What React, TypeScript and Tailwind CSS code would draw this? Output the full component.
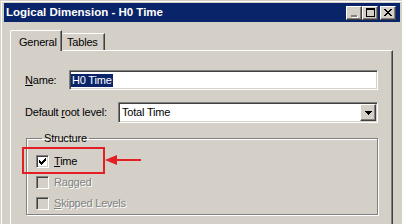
import React from 'react';

const raised =
  'bg-[#d4d0c8] border border-t-white border-l-white border-r-[#404040] border-b-[#404040] shadow-[inset_-1px_-1px_0_#808080]';
const sunken =
  'border border-t-[#808080] border-l-[#808080] border-r-white border-b-white shadow-[inset_1px_1px_0_#404040,inset_-1px_-1px_0_#d4d0c8]';

function TitleButton({ children, gap }: { children: React.ReactNode; gap?: boolean }) {
  return (
    <div className={`${raised} w-[16px] h-[14px] flex items-center justify-center ${gap ? 'ml-[2px]' : ''}`}>
      {children}
    </div>
  );
}

// classic 7x7 check mark, pixel by pixel
const checkPixels: [number, number, number][] = [
  [6, 0, 1], [5, 1, 2], [0, 2, 1], [4, 2, 3], [0, 3, 2], [3, 3, 3], [0, 4, 5], [1, 5, 3], [2, 6, 1],
];

function CheckBox({ checked, disabled }: { checked?: boolean; disabled?: boolean }) {
  return (
    <div className={`${sunken} w-[13px] h-[13px] flex items-center justify-center ${disabled ? 'bg-[#d4d0c8]' : 'bg-white'}`}>
      {checked && (
        <svg width="7" height="7" viewBox="0 0 7 7" shapeRendering="crispEdges">
          {checkPixels.map(([x, y, w]) => (
            <rect key={`${x}-${y}`} x={x} y={y} width={w} height={1} fill="#000" />
          ))}
        </svg>
      )}
    </div>
  );
}

function Row({ mnemonic, rest, checked, disabled, plain }: {
  mnemonic: string; rest: string; checked?: boolean; disabled?: boolean; plain?: boolean;
}) {
  return (
    <div className="h-[21px] flex items-center">
      <CheckBox checked={checked} disabled={disabled} />
      <span className={`ml-[5px] ${disabled ? 'text-[#808080] [text-shadow:1px_1px_0_#fff]' : 'text-black'}`}>
        {plain ? mnemonic : <u className="underline-offset-1">{mnemonic}</u>}
        {rest}
      </span>
    </div>
  );
}

export default function App() {
  return (
    <div className="relative w-[402px] h-[224px] overflow-hidden bg-[#d4d0c8] pt-[3px] pl-[4px] shadow-[inset_1px_1px_0_#d4d0c8,inset_2px_2px_0_#fff] font-['Liberation_Sans',Arial,sans-serif] text-[11px] leading-[13px] tracking-[-0.2px] text-black">
      {/* title bar */}
      <div className="mr-[2px] h-[19px] bg-[#0a246a] flex items-center justify-between pl-[2px] pr-[4px]">
        <span className="text-white font-bold text-[11.5px] tracking-[0px]">Logical Dimension - H0 Time</span>
        <div className="flex">
          <TitleButton>
            <div className="w-[6px] h-[2px] bg-[#808080] mt-[6px] shadow-[1px_1px_0_#fff]" />
          </TitleButton>
          <TitleButton>
            <div className="w-[9px] h-[9px] border border-black border-t-2" />
          </TitleButton>
          <TitleButton gap>
            <svg width="8" height="7" viewBox="0 0 8 7" shapeRendering="crispEdges">
              <path d="M0 0h2v1h1v1h2v-1h1v-1h2v1h-1v1h-1v1h-1v1h1v1h1v1h1v1h-2v-1h-1v-1h-2v1h-1v1h-2v-1h1v-1h1v-1h1v-1h-1v-1h-1v-1h-1z" fill="#000" />
            </svg>
          </TitleButton>
        </div>
      </div>

      {/* tabs */}
      <div className="ml-[6px] mt-[8px] flex items-end relative z-10">
        <div className="w-[52px] h-[21px] -mb-[1px] bg-[#d4d0c8] border-l border-t border-white rounded-tl-[2px] border-r border-r-[#404040] shadow-[inset_-1px_0_0_#808080] pl-[8px] pt-[5px]">
          General
        </div>
        <div className="w-[43px] h-[17px] bg-[#d4d0c8] border-t border-white rounded-tl-[2px] border-r border-r-[#404040] shadow-[inset_-1px_0_0_#808080] pl-[5px] pt-[2px]">
          Tables
        </div>
      </div>

      {/* panel */}
      <div className="ml-[6px] w-[383px] h-[200px] border-t border-l border-white border-r border-r-[#404040] shadow-[inset_-1px_0_0_#808080] pl-[14px] pt-[19px]">
        <div className="flex items-center h-[20px]">
          <span className="w-[44px]"><u className="underline-offset-1">N</u>ame:</span>
          <div className={`${sunken} bg-white w-[309px] h-[20px] flex items-center pl-[1px]`}>
            <span className="bg-[#0a246a] text-white px-[1px] h-[13px]">H0 Time</span>
          </div>
        </div>

        <div className="flex items-center h-[21px] mt-[12px]">
          <span className="w-[93px]">Default <u className="underline-offset-1">r</u>oot level:</span>
          <div className={`${sunken} bg-white w-[260px] h-[21px] flex items-center justify-between pl-[3px] pr-[1px]`}>
            <span>Total Time</span>
            <div className={`${raised} w-[16px] h-[17px] flex items-center justify-center`}>
              <svg width="7" height="4" viewBox="0 0 7 4" shapeRendering="crispEdges">
                <path d="M0 0h7v1h-1v1h-1v1h-1v1h-1v-1h-1v-1h-1v-1h-1z" fill="#000" />
              </svg>
            </div>
          </div>
        </div>

        <fieldset className="ml-[1px] mt-[9px] w-[352px] h-[83px] border border-[#808080] shadow-[inset_1px_1px_0_#fff,1px_1px_0_#fff] pl-[9px] pt-[6px]">
          <legend className="ml-[6px] px-[2px]">Structure</legend>
          <Row mnemonic="T" rest="ime" checked />
          <Row mnemonic="R" rest="agged" disabled plain />
          <Row mnemonic="S" rest="kipped Levels" disabled />
        </fieldset>
      </div>

      {/* annotation */}
      <div className="absolute left-[22px] top-[147px] w-[83px] h-[27px] border-2 border-[#e31e24]" />
      <svg className="absolute left-[104px] top-[154px]" width="38" height="12" viewBox="0 0 38 12">
        <polygon points="1,6 13,1 13,11" fill="#e31e24" />
        <line x1="12" y1="6" x2="37" y2="6" stroke="#e31e24" strokeWidth="2" />
      </svg>
    </div>
  );
}
